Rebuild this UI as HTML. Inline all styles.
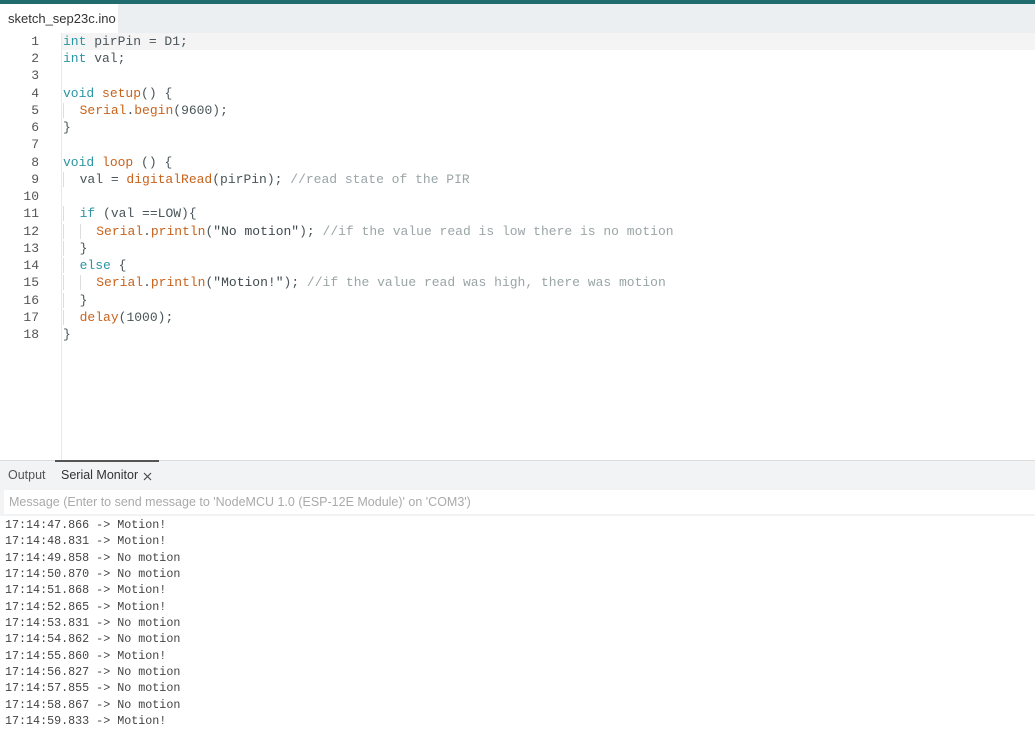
<!DOCTYPE html>
<html><head><style>
*{margin:0;padding:0;box-sizing:border-box}
body{width:1035px;height:741px;overflow:hidden;background:#fff;font-family:"Liberation Sans",sans-serif;position:relative}
.top{position:absolute;left:0;top:0;width:1035px;height:4px;background:#1f6b6e}
.tabs{position:absolute;left:0;top:4px;width:1035px;height:29px;background:#eceff1}
.tab{position:absolute;left:0;top:0;width:118px;height:29px;background:#fff;font-size:13px;color:#333;padding:7px 0 0 8px}
.hl{position:absolute;left:62px;top:33px;width:973px;height:17px;background:#f4f4f4}
.gut{position:absolute;left:61px;top:33px;width:1px;height:427px;background:#e8e8e8}
.code{position:absolute;top:33px;font-family:"Liberation Mono",monospace;font-size:13px;line-height:17.24px;white-space:pre}
.nums{left:0;width:39px;text-align:right;color:#555}
.src{left:63px;color:#4a5559}
.k{color:#2b95a3}.f{color:#c8621c}.c{color:#9aa5a6}.s{color:#3f4a4e}
.ig{border-left:1px solid #ddd}
.panel{position:absolute;left:0;top:460px;width:1035px;height:29px;background:#f1f3f4;border-top:1px solid #ddd}
.ptab{position:absolute;top:7px;font-size:12.5px;line-height:15px;color:#333}
.ul{position:absolute;left:55px;top:460px;width:104px;height:2px;background:#555}
.msgwrap{position:absolute;left:0;top:489px;width:1035px;height:27px;background:#f1f3f4}
.msg{position:absolute;left:4px;top:1px;width:1031px;height:24px;background:#fff;font-size:12.5px;color:#aaa;padding:5px 0 0 5px}
.log{position:absolute;left:5px;top:517px;font-family:"Liberation Mono",monospace;font-size:11.7px;line-height:16.33px;color:#444;white-space:pre}
</style></head><body>
<div class="top"></div>
<div class="tabs"><div class="tab">sketch_sep23c.ino</div></div>
<div class="hl"></div>
<div class="gut"></div>
<div class="code nums">1
2
3
4
5
6
7
8
9
10
11
12
13
14
15
16
17
18</div>
<div class="code src"><span class="k">int</span> pirPin = D1;
<span class="k">int</span> val;

<span class="k">void</span> <span class="f">setup</span>() {
<span class="ig"> </span> <span class="f">Serial</span>.<span class="f">begin</span>(9600);
}

<span class="k">void</span> <span class="f">loop</span> () {
<span class="ig"> </span> val = <span class="f">digitalRead</span>(pirPin); <span class="c">//read state of the PIR</span>

<span class="ig"> </span> <span class="k">if</span> (val ==LOW){
<span class="ig"> </span> <span class="ig"> </span> <span class="f">Serial</span>.<span class="f">println</span>(<span class="s">"No motion"</span>); <span class="c">//if the value read is low there is no motion</span>
<span class="ig"> </span> }
<span class="ig"> </span> <span class="k">else</span> {
<span class="ig"> </span> <span class="ig"> </span> <span class="f">Serial</span>.<span class="f">println</span>(<span class="s">"Motion!"</span>); <span class="c">//if the value read was high, there was motion</span>
<span class="ig"> </span> }
<span class="ig"> </span> <span class="f">delay</span>(1000);
}</div>
<div class="panel">
<span class="ptab" style="left:8px;color:#555">Output</span>
<span class="ptab" style="left:61px">Serial Monitor</span>
<svg style="position:absolute;left:143px;top:11px" width="9" height="9" viewBox="0 0 9 9"><path d="M1 1L8 8M8 1L1 8" stroke="#444" stroke-width="1.1" fill="none"/></svg>
</div>
<div class="ul"></div>
<div class="msgwrap"><div class="msg">Message (Enter to send message to 'NodeMCU 1.0 (ESP-12E Module)' on 'COM3')</div></div>
<div class="log">17:14:47.866 -&gt; Motion!
17:14:48.831 -&gt; Motion!
17:14:49.858 -&gt; No motion
17:14:50.870 -&gt; No motion
17:14:51.868 -&gt; Motion!
17:14:52.865 -&gt; Motion!
17:14:53.831 -&gt; No motion
17:14:54.862 -&gt; No motion
17:14:55.860 -&gt; Motion!
17:14:56.827 -&gt; No motion
17:14:57.855 -&gt; No motion
17:14:58.867 -&gt; No motion
17:14:59.833 -&gt; Motion!</div>
</body></html>
